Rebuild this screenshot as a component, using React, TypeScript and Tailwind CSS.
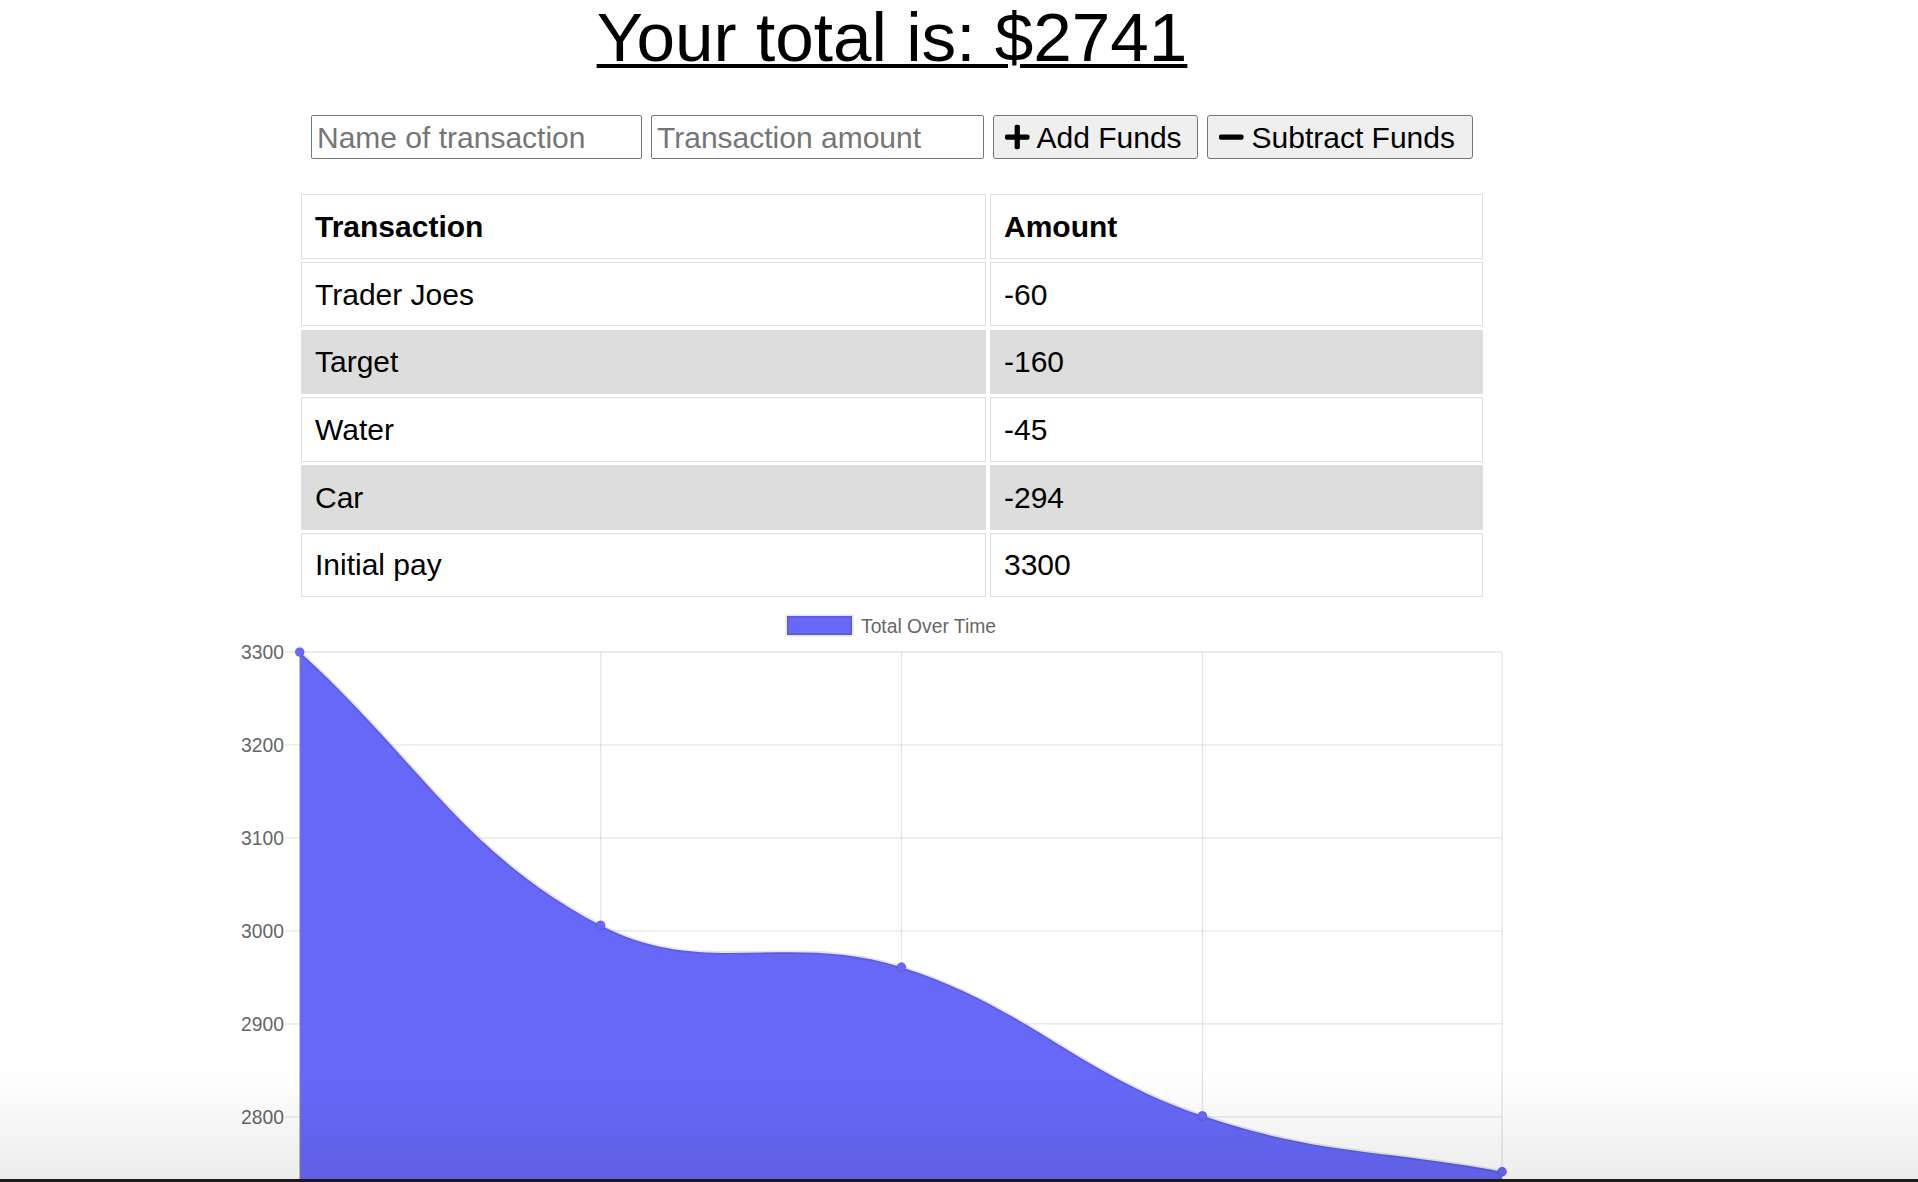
import React from "react";

const FONT = { fontFamily: '"Liberation Sans", Arial, Helvetica, sans-serif' };

const rows: [string, string][] = [
  ["Trader Joes", "-60"],
  ["Target", "-160"],
  ["Water", "-45"],
  ["Car", "-294"],
  ["Initial pay", "3300"],
];

const Y0 = 652;
const PER = 0.9296;
const yOf = (v: number) => Y0 + (3300 - v) * PER;
const XS = [299.7, 600.6, 901.5, 1202.4, 1502.1];
const VALS = [3300, 3006, 2961, 2801, 2741];
const AREA = { left: 300, right: 1502, top: 652, bottom: yOf(2700) };
const BLUE = "#6768f8";

type P = { x: number; y: number };

function buildPath() {
  const pts: P[] = XS.map((x, i) => ({ x, y: yOf(VALS[i]) }));
  const t = 0.4;
  const clamp = (p: P): P => ({
    x: Math.min(Math.max(p.x, AREA.left), AREA.right),
    y: Math.min(Math.max(p.y, AREA.top), AREA.bottom),
  });
  const cps = pts.map((cur, i) => {
    const prev = pts[i - 1] ?? cur;
    const next = pts[i + 1] ?? cur;
    const d01 = Math.hypot(cur.x - prev.x, cur.y - prev.y);
    const d12 = Math.hypot(next.x - cur.x, next.y - cur.y);
    let s01 = d01 / (d01 + d12);
    let s12 = d12 / (d01 + d12);
    if (isNaN(s01)) s01 = 0;
    if (isNaN(s12)) s12 = 0;
    const fa = t * s01;
    const fb = t * s12;
    return {
      prev: clamp({ x: cur.x - fa * (next.x - prev.x), y: cur.y - fa * (next.y - prev.y) }),
      next: clamp({ x: cur.x + fb * (next.x - prev.x), y: cur.y + fb * (next.y - prev.y) }),
    };
  });
  let d = `M ${pts[0].x} ${pts[0].y}`;
  for (let i = 0; i < pts.length - 1; i++) {
    const a = cps[i].next;
    const b = cps[i + 1].prev;
    const p = pts[i + 1];
    d += ` C ${a.x} ${a.y} ${b.x} ${b.y} ${p.x} ${p.y}`;
  }
  const last = pts[pts.length - 1];
  const fill = `${d} L ${last.x} ${AREA.bottom} L ${pts[0].x} ${AREA.bottom} Z`;
  return { line: d, fill, pts };
}

function Chart() {
  const { line, fill, pts } = buildPath();
  const labels = [3300, 3200, 3100, 3000, 2900, 2800];
  const grid = [3300, 3200, 3100, 3000, 2900, 2800, 2700];
  return (
    <svg
      className="block w-[1320px] h-[585px]"
      viewBox="232 597 1320 585"
      width={1320}
      height={585}
    >
      {/* legend */}
      <rect x={787} y={616} width={65} height={19} fill={BLUE} stroke="rgba(0,0,0,0.1)" strokeWidth={3} />
      <text x={861} y={628} fontSize={19.3} fill="#666" dominantBaseline="middle" style={FONT}>
        Total Over Time
      </text>
      {/* horizontal grid + ticks */}
      {grid.map((v) => (
        <line key={v} x1={285} x2={1502} y1={yOf(v)} y2={yOf(v)} stroke="rgba(0,0,0,0.1)" strokeWidth={1.3} />
      ))}
      {labels.map((v) => (
        <text
          key={v}
          x={284}
          y={yOf(v) + 2}
          fontSize={19.3}
          fill="#666"
          textAnchor="end"
          dominantBaseline="middle"
          style={FONT}
        >
          {v}
        </text>
      ))}
      {/* vertical grid */}
      {XS.map((x) => (
        <line key={x} x1={x} x2={x} y1={AREA.top} y2={AREA.bottom + 10} stroke="rgba(0,0,0,0.1)" strokeWidth={1.3} />
      ))}
      {/* dataset */}
      <path d={fill} fill={BLUE} />
      <path d={line} fill="none" stroke="rgba(0,0,0,0.1)" strokeWidth={3.5} />
      {pts.map((p, i) => (
        <circle key={i} cx={p.x} cy={p.y} r={4.6} fill={BLUE} stroke="rgba(0,0,0,0.1)" strokeWidth={1.3} />
      ))}
    </svg>
  );
}

function PlusIcon() {
  return (
    <svg viewBox="0 0 448 512" className="w-[24.5px] h-[28px] shrink-0" fill="currentColor">
      <path d="M416 208H272V64c0-17.670-14.330-32-32-32h-32c-17.670 0-32 14.330-32 32v144H32c-17.670 0-32 14.330-32 32v32c0 17.670 14.330 32 32 32h144v144c0 17.670 14.330 32 32 32h32c17.670 0 32-14.330 32-32V304h144c17.670 0 32-14.330 32-32v-32c0-17.670-14.330-32-32-32z" />
    </svg>
  );
}

function MinusIcon() {
  return (
    <svg viewBox="0 0 448 512" className="w-[24.5px] h-[28px] shrink-0" fill="currentColor">
      <path d="M416 208H32c-17.670 0-32 14.330-32 32v32c0 17.670 14.330 32 32 32h384c17.670 0 32-14.330 32-32v-32c0-17.670-14.330-32-32-32z" />
    </svg>
  );
}

export default function App() {
  return (
    <div className="relative w-[1918px] h-[1182px] overflow-hidden bg-white text-black" style={FONT}>
      <div className="w-[1784px] flex flex-col items-center">
        <h1 className="pt-[3px] text-[69.3px] leading-none font-normal underline decoration-4 underline-offset-[3px]">
          Your total is: $2741
        </h1>

        <div className="mt-[43px] flex gap-[9px] h-[44px]">
          <input
            type="text"
            placeholder="Name of transaction"
            className="w-[331px] h-[44px] border border-[#767676] rounded-[2px] pl-[5px] text-[30px] placeholder:text-[#757575] bg-white outline-none"
            style={FONT}
          />
          <input
            type="text"
            placeholder="Transaction amount"
            className="w-[333px] h-[44px] border border-[#767676] rounded-[2px] pl-[5px] text-[30px] placeholder:text-[#757575] bg-white outline-none"
            style={FONT}
          />
          <button
            className="w-[205px] h-[44px] flex items-center gap-[7px] pl-[11px] border border-[#767676] rounded-[3px] bg-[#efefef] text-[30px] text-black"
            style={FONT}
          >
            <PlusIcon />
            <span>Add Funds</span>
          </button>
          <button
            className="w-[266px] h-[44px] flex items-center gap-[8px] pl-[11px] border border-[#767676] rounded-[3px] bg-[#efefef] text-[30px] text-black"
            style={FONT}
          >
            <MinusIcon />
            <span>Subtract Funds</span>
          </button>
        </div>

        <div className="mt-[35px] w-[1182px] grid grid-cols-[685px_493px] gap-x-[4px] gap-y-[3.2px] text-[30px]">
          <div className="h-[64.5px] flex items-center px-[13px] border border-[#dddddd] font-bold">Transaction</div>
          <div className="h-[64.5px] flex items-center px-[13px] border border-[#dddddd] font-bold">Amount</div>
          {rows.map(([name, amt], i) => {
            const striped = i % 2 === 1;
            return (
              <React.Fragment key={name}>
                <div
                  className={
                    striped
                      ? "h-[64.5px] flex items-center px-[13px] border border-[#dddddd] bg-[#dddddd]"
                      : "h-[64.5px] flex items-center px-[13px] border border-[#dddddd]"
                  }
                >
                  {name}
                </div>
                <div
                  className={
                    striped
                      ? "h-[64.5px] flex items-center px-[13px] border border-[#dddddd] bg-[#dddddd]"
                      : "h-[64.5px] flex items-center px-[13px] border border-[#dddddd]"
                  }
                >
                  {amt}
                </div>
              </React.Fragment>
            );
          })}
        </div>

        <Chart />
      </div>

      <div className="pointer-events-none absolute left-0 right-0 bottom-[3px] h-[110px] bg-gradient-to-b from-transparent to-[rgba(0,0,0,0.075)]" />
      <div className="absolute left-0 right-0 bottom-0 h-[3px] bg-[#1b1b1d]" />
    </div>
  );
}
